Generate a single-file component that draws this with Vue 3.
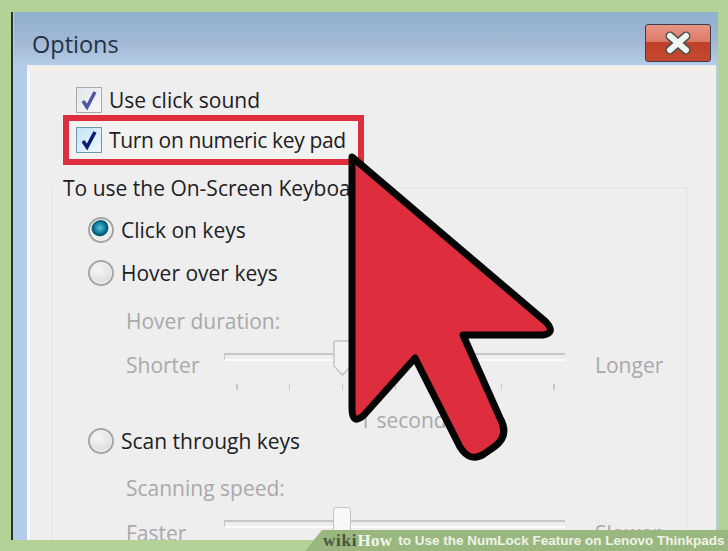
<script setup>
const ticks = [0, 1, 2, 3, 4, 5, 6]
</script>

<template>
  <div class="page">
    <div class="window">
      <header class="titlebar">
        <span class="title">Options</span>
        <button class="close" aria-label="Close">
          <svg width="28" height="24" viewBox="0 0 28 24">
            <path class="x-outline" d="M6 5 L22 19 M22 5 L6 19" />
            <path class="x-fill" d="M6 5 L22 19 M22 5 L6 19" />
          </svg>
        </button>
      </header>
      <main class="client">
        <label class="check first">
          <span class="box faded"><svg width="20" height="22" viewBox="0 0 20 22"><path d="M4 12 L8 18 L16 3" /></svg></span>
          Use click sound
        </label>
        <div class="highlight">
          <label class="check tight">
            <span class="box active"><svg width="20" height="22" viewBox="0 0 20 22"><path d="M4 12 L8 18 L16 3" /></svg></span>
            Turn on numeric key pad
          </label>
        </div>
        <section class="group">
          <div class="legend">To use the On-Screen Keyboard</div>
          <div class="radio r1"><span class="dot on"></span>Click on keys</div>
          <div class="radio r2"><span class="dot"></span>Hover over keys</div>
          <div class="muted label-a">Hover duration:</div>
          <div class="slider-row first-slider">
            <span class="muted end">Shorter</span>
            <div class="slider">
              <div class="track"></div>
              <svg class="thumb-shape" width="19" height="36" viewBox="0 0 19 36">
                <path d="M3 1 H16 Q18 1 18 3 V26 L9.500 35 L1 26 V3 Q1 1 3 1 Z" />
              </svg>
              <div class="ticks"><i v-for="t in ticks" :key="t"></i></div>
            </div>
            <span class="muted end right">Longer</span>
          </div>
          <div class="muted duration">1 seconds</div>
          <div class="radio r3"><span class="dot"></span>Scan through keys</div>
          <div class="muted label-b">Scanning speed:</div>
          <div class="slider-row second">
            <span class="muted end">Faster</span>
            <div class="slider">
              <div class="track"></div>
              <div class="thumb"></div>
            </div>
            <span class="muted end right">Slower</span>
          </div>
        </section>
      </main>
    </div>

    <svg class="arrow" width="728" height="551" viewBox="0 0 728 551">
      <path d="M352 157 L546 322 Q556 333 543 335 L463 335 L500 418 Q510 436 494 447 L484 454 Q470 463 460 447 L415 358 L364 415 Q352 426 352 408 Z" />
    </svg>

    <div class="banner">
      <span class="wiki">wiki</span><span class="how">How</span><span class="rest">to Use the NumLock Feature on Lenovo Thinkpads</span>
    </div>
  </div>
</template>

<style scoped>
.page {
  position: relative;
  width: 728px;
  height: 551px;
  overflow: hidden;
  background: #b4d197;
  padding: 12px 0 0 11px;
  box-sizing: border-box;
  font-family: "Open Sans", "Liberation Sans", sans-serif;
  color: #1c2024;
}
.window {
  width: 707px;
  height: 528px;
  box-sizing: border-box;
  border-left: 2px solid #25352b;
  padding-left: 1px;
  padding-right: 2px;
  background: #b3cde8;
  display: flex;
  flex-direction: column;
}
.titlebar {
  height: 53px;
  flex: none;
  margin-right: -2px;
  padding: 12px 7px 0 18px;
  box-sizing: border-box;
  display: flex;
  justify-content: space-between;
  align-items: flex-start;
  background: linear-gradient(#8fb0cf, #a3b9d5 60%, #b6cde9);
}
.title {
  font-size: 23.5px;
  line-height: 40px;
  color: #1f3247;
}
.close {
  width: 66px;
  height: 38px;
  padding: 0;
  border: 1.5px solid #3b3d48;
  border-radius: 3px;
  background: linear-gradient(#e89583, #dd7a68 46%, #bf3f28 47%, #c4492f);
  display: flex;
  align-items: center;
  justify-content: center;
}
.x-outline { fill: none; stroke: #4a5250; stroke-width: 9; stroke-linecap: round; }
.x-fill { fill: none; stroke: #f1f5f0; stroke-width: 6; stroke-linecap: round; }
.client {
  flex: 1;
  margin-left: 13px;
  min-height: 0;
  overflow: hidden;
  background: #eeeeee;
  border-top: 1px solid #e4eeee;
  box-shadow: inset 0 5px 0 #f3f1e8, inset 3px 0 0 #f5f8f4;
  padding: 20px 28px 0 25px;
  box-sizing: border-box;
}
.check {
  display: flex;
  align-items: center;
  gap: 7px;
  font-size: 21px;
  line-height: 28px;
  white-space: nowrap;
}
.tight { letter-spacing: -0.35px; }
.first { margin-left: 24px; height: 28px; }
.box {
  width: 26px;
  height: 26px;
  flex: none;
  box-sizing: border-box;
  display: flex;
  align-items: center;
  justify-content: center;
}
.box path { fill: none; stroke-width: 3.5; }
.faded { border: 1px solid #a9a9a9; background: linear-gradient(135deg, #e4e6ea, #f7f7f7); }
.faded path { stroke: #4f56a0; }
.active { border: 1px solid #6d9aa8; background: linear-gradient(135deg, #c4e3f5, #eef8fd); }
.active path { stroke: #0b1f70; }
.highlight {
  width: 301px;
  height: 50px;
  margin: 1px 0 0 11px;
  border: 6px solid #de2e3e;
  box-sizing: border-box;
  padding: 5px 0 0 7px;
  background: #f2f2f0;
}
.group {
  margin-top: 23px;
  height: 400px;
  width: 635px;
  border: 1px solid #e0e0e0;
  border-bottom: 0;
  box-shadow: inset 1px 1px 0 #f8f8f8;
  box-sizing: border-box;
  position: relative;
  padding-left: 35px;
}
.legend {
  position: absolute;
  left: 6px;
  top: -15px;
  padding: 0 4px;
  background: #eeeeee;
  font-size: 21px;
  line-height: 29px;
  white-space: nowrap;
}
.radio {
  display: flex;
  align-items: center;
  gap: 7px;
  font-size: 21px;
  line-height: 28px;
  white-space: nowrap;
  height: 28px;
}
.r1 { margin-top: 27px; }
.r2 { margin-top: 15px; }
.dot {
  width: 26px;
  height: 26px;
  flex: none;
  box-sizing: border-box;
  border-radius: 50%;
  border: 2px solid #a5a5a5;
  background: radial-gradient(circle at 40% 35%, #f7f7f7, #d4d4d4);
  box-shadow: inset 0 0 0 1px #f5f5f5;
}
.dot.on {
  background: radial-gradient(circle at 45% 40%, #5ec2d8 0, #0f7c9c 30%, #0b4e6c 44%, #f0f0f0 50%, #e0e0e0);
}
.muted { color: #a9a9a9; font-size: 21px; line-height: 28px; white-space: nowrap; }
.label-a { margin: 20px 0 0 38px; height: 28px; }
.slider-row {
  display: flex;
  align-items: flex-start;
  margin: 9px 0 0 38px;
}
.first-slider { height: 69px; }
.end { width: 98px; flex: none; margin-top: 7px; }
.end.right { margin-left: 30px; }
.slider { position: relative; width: 341px; flex: none; height: 46px; }
.track {
  margin-top: 9px;
  height: 4px;
  border-top: 2px solid #c6c6c6;
  border-left: 1px solid #c6c6c6;
  border-bottom: 2px solid #fbfbfb;
}
.thumb {
  position: absolute;
  left: 109px;
  top: -4px;
  width: 18px;
  height: 34px;
  box-sizing: border-box;
  border: 1.5px solid #c4c4c4;
  border-radius: 3px;
  background: #f7f7f7;
}
.thumb-shape {
  position: absolute;
  left: 109px;
  top: -4px;
}
.thumb-shape path { fill: #f2f2f2; stroke: #c4c4c4; stroke-width: 1.5; }
.ticks {
  display: flex;
  justify-content: space-between;
  padding: 23px 10px 0 12px;
}
.ticks i {
  display: block;
  width: 1.5px;
  height: 6px;
  background: #c9c9c9;
}
.duration { margin: 0 0 0 271px; height: 14px; line-height: 14px; }
.label-b { margin: 19px 0 0 38px; height: 28px; }
.second { margin-top: 9px; }
.second .end { margin-top: 8px; }
.arrow {
  position: absolute;
  left: 0;
  top: 0;
}
.arrow path {
  fill: #de2e3e;
  stroke: #050505;
  stroke-width: 7;
  stroke-linejoin: round;
}
.banner {
  position: absolute;
  left: 305px;
  right: 0;
  bottom: 0;
  height: 21px;
  box-sizing: border-box;
  padding: 0 0 0 18px;
  background: #9bb780;
  clip-path: polygon(17px 0, 100% 0, 100% 100%, 0 100%);
  display: flex;
  align-items: center;
  font-family: "Liberation Sans", sans-serif;
  font-weight: 700;
  font-size: 13.5px;
  white-space: nowrap;
  color: #eef3e6;
}
.wiki { font-family: "Liberation Serif", serif; font-size: 17px; letter-spacing: 0.8px; color: #4a5640; }
.how { font-family: "Liberation Serif", serif; font-size: 17px; letter-spacing: 0.3px; margin-right: 6px; color: #f1f5ea; }
</style>
